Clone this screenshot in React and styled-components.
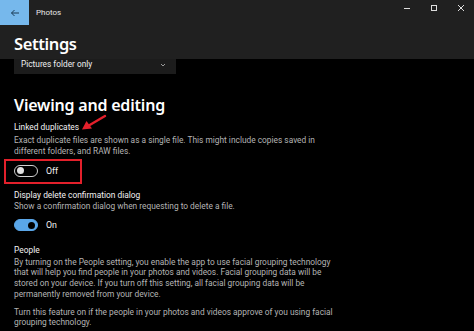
import React from "react";
import styled, { createGlobalStyle } from "styled-components";

const GlobalStyle = createGlobalStyle`
  html, body { margin: 0; padding: 0; background: #000; }
  body { font-family: Roboto, "Liberation Sans", Arial, sans-serif; -webkit-font-smoothing: antialiased; }
  * { box-sizing: border-box; }
`;

const Window = styled.div`
  position: relative;
  width: 474px;
  height: 331px;
  overflow: hidden;
  background: #000;
  color: #fff;
`;

const Header = styled.header`
  background: #202020;
  height: 59px;
  display: flex;
  flex-direction: column;
`;

const TitleBar = styled.div`
  height: 25px;
  display: flex;
  align-items: center;
`;

const BackButton = styled.div`
  width: 29px;
  height: 25px;
  background: #76b8ec;
  display: flex;
  align-items: center;
  justify-content: center;
`;

const AppName = styled.span`
  margin-left: 7px;
  font-size: 8px;
  color: #e6e6e6;
  flex: 1;
`;

const Controls = styled.div`
  display: flex;
  align-self: flex-start;
  height: 15px;
`;

const ControlButton = styled.div`
  width: 27px;
  height: 15px;
  display: flex;
  align-items: center;
  justify-content: center;
`;

const PageTitle = styled.h1`
  margin: 9px 0 0 14px;
  font-family: "Noto Sans", "Open Sans", sans-serif;
  font-size: 16.5px;
  letter-spacing: -0.4px;
  font-weight: 600;
  line-height: 20px;
  color: #fff;
`;

const Content = styled.main`
  padding: 0 14px;
  display: flex;
  flex-direction: column;
`;

const Dropdown = styled.div`
  width: 162px;
  height: 15px;
  background: #1c1c1c;
  display: flex;
  align-items: flex-start;
  justify-content: space-between;
  padding: 0 10px 0 7px;
  font-size: 8.3px;
  line-height: 11px;
  color: #f0f0f0;
`;

const SectionTitle = styled.h2`
  margin: 20px 0 0;
  font-family: "Noto Sans", "Open Sans", sans-serif;
  font-size: 16px;
  letter-spacing: -0.2px;
  font-weight: 600;
  line-height: 22px;
  color: #fff;
`;

const Setting = styled.section`
  display: flex;
  flex-direction: column;
  margin-top: ${(p) => p.$gap}px;
`;

const Label = styled.div`
  font-size: 8.4px;
  line-height: 10.75px;
  color: #f2f2f2;
`;

const Description = styled.p`
  margin: ${(p) => p.$top || 0}px 0 0;
  font-size: 8.35px;
  line-height: 10.75px;
  color: #b4b4b4;
`;

const ToggleRow = styled.div`
  display: flex;
  align-items: center;
  gap: 8px;
  margin-top: ${(p) => p.$top}px;
  height: 13px;
`;

const Track = styled.div`
  width: 24px;
  height: 12px;
  border-radius: 6px;
  display: flex;
  align-items: center;
  padding: 0 2px;
  justify-content: ${(p) => (p.$on ? "flex-end" : "flex-start")};
  background: ${(p) => (p.$on ? "#5aa6e8" : "transparent")};
  border: 1px solid ${(p) => (p.$on ? "#5aa6e8" : "#d0d0d0")};
`;

const Knob = styled.div`
  width: 7px;
  height: 7px;
  border-radius: 50%;
  background: ${(p) => (p.$on ? "#000" : "#e0e0e0")};
`;

const ToggleText = styled.span`
  font-size: 8.8px;
  color: #f2f2f2;
`;

const Highlight = styled.div`
  position: absolute;
  left: 4px;
  top: 159px;
  width: 78px;
  height: 25px;
  border: 2px solid #e3202b;
`;

const Arrow = styled.svg`
  position: absolute;
  left: 80px;
  top: 113px;
`;

function Toggle({ on }) {
  return (
    <Track $on={on}>
      <Knob $on={on} />
    </Track>
  );
}

export default function App() {
  return (
    <>
      <GlobalStyle />
      <Window>
        <Header>
          <TitleBar>
            <BackButton>
              <svg width="10" height="8" viewBox="0 0 10 8" fill="none" stroke="#1a3a55" strokeWidth="1">
                <path d="M9 4H1.5M4.5 1L1.5 4l3 3" />
              </svg>
            </BackButton>
            <AppName>Photos</AppName>
            <Controls>
              <ControlButton>
                <svg width="8" height="8" viewBox="0 0 8 8" stroke="#ddd" strokeWidth="1">
                  <path d="M1 4.5h6" />
                </svg>
              </ControlButton>
              <ControlButton>
                <svg width="8" height="8" viewBox="0 0 8 8" fill="none" stroke="#ddd" strokeWidth="1">
                  <rect x="1.5" y="1.5" width="5" height="5" />
                </svg>
              </ControlButton>
              <ControlButton>
                <svg width="8" height="8" viewBox="0 0 8 8" stroke="#ddd" strokeWidth="1">
                  <path d="M1 1l6 6M7 1L1 7" />
                </svg>
              </ControlButton>
            </Controls>
          </TitleBar>
          <PageTitle>Settings</PageTitle>
        </Header>
        <Content>
          <Dropdown>
            <span>Pictures folder only</span>
            <svg width="6" height="6" viewBox="0 0 6 6" fill="none" stroke="#aaa" strokeWidth="0.9" style={{ marginTop: 3 }}>
              <path d="M1 2l2 2 2-2" />
            </svg>
          </Dropdown>
          <SectionTitle>Viewing and editing</SectionTitle>
          <Setting $gap={6}>
            <Label>Linked duplicates</Label>
            <Description $top={2}>
              Exact duplicate files are shown as a single file. This might include copies saved in
              <br />
              different folders, and RAW files.
            </Description>
            <ToggleRow $top={8}>
              <Toggle on={false} />
              <ToggleText>Off</ToggleText>
            </ToggleRow>
          </Setting>
          <Setting $gap={13}>
            <Label>Display delete confirmation dialog</Label>
            <Description>Show a confirmation dialog when requesting to delete a file.</Description>
            <ToggleRow $top={7}>
              <Toggle on />
              <ToggleText>On</ToggleText>
            </ToggleRow>
          </Setting>
          <Setting $gap={13}>
            <Label>People</Label>
            <Description $top={1}>
              By turning on the People setting, you enable the app to use facial grouping technology
              <br />
              that will help you find people in your photos and videos. Facial grouping data will be
              <br />
              stored on your device. If you turn off this setting, all facial grouping data will be
              <br />
              permanently removed from your device.
            </Description>
            <Description $top={7}>
              Turn this feature on if the people in your photos and videos approve of you using facial
              <br />
              grouping technology.
            </Description>
          </Setting>
        </Content>
        <Highlight />
        <Arrow width="28" height="20" viewBox="0 0 28 20">
          <path d="M25 3L8 13" stroke="#e3202b" strokeWidth="2.4" strokeLinecap="round" />
          <path d="M2 16.5L6.5 8L12 15.5Z" fill="#e3202b" />
        </Arrow>
      </Window>
    </>
  );
}
